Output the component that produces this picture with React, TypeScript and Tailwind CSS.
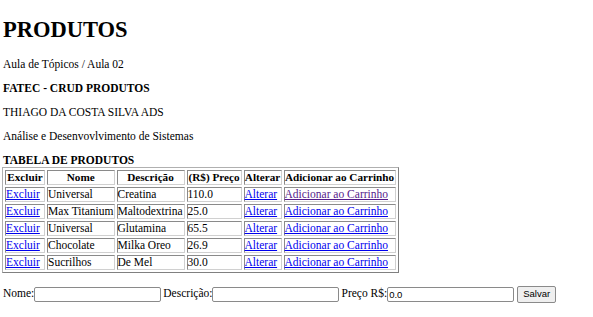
import React from "react";

const rows = [
  ["Universal", "Creatina", "110.0"],
  ["Max Titanium", "Maltodextrina", "25.0"],
  ["Universal", "Glutamina", "65.5"],
  ["Chocolate", "Milka Oreo", "26.9"],
  ["Sucrilhos", "De Mel", "30.0"],
];

const cell =
  "border border-[#8a8a8a] border-b-[#d0d0d0] border-r-[#d0d0d0] p-0 leading-[13px] whitespace-nowrap";

const headers: [string, string][] = [
  ["Excluir", "w-[40px]"],
  ["Nome", "w-[66px]"],
  ["Descrição", "w-[68px]"],
  ["(R$) Preço", "w-[55px]"],
  ["Alterar", "w-[38px]"],
  ["Adicionar ao Carrinho", "w-[112px]"],
];

export default function App() {
  return (
    <div
      className="min-h-[317px] bg-white text-black px-[3px] text-[11.5px]"
      style={{ fontFamily: '"Liberation Serif", "Times New Roman", serif' }}
    >
      <h1 className="text-[22.5px] font-bold leading-[26px] pt-[17px] mb-[15px]">PRODUTOS</h1>
      <p className="leading-[13px] mb-[11px]">Aula de Tópicos / Aula 02</p>
      <p className="leading-[13px] mb-[11px] font-bold">FATEC - CRUD PRODUTOS</p>
      <p className="leading-[13px] mb-[11px]">THIAGO DA COSTA SILVA ADS</p>
      <p className="leading-[13px] mb-[11px]">Análise e Desenvovlvimento de Sistemas</p>
      <p className="leading-[13px] font-bold">TABELA DE PRODUTOS</p>
      <table
        className="border border-[#b0b0b0] border-b-[#808080] border-r-[#808080] border-separate -ml-[1px]"
        style={{ borderSpacing: "2px" }}
      >
        <thead>
          <tr>
            {headers.map(([h, w]) => (
              <th key={h} className={`${cell} ${w} font-bold text-center text-[11.2px]`}>
                {h}
              </th>
            ))}
          </tr>
        </thead>
        <tbody>
          {rows.map((r, i) => (
            <tr key={i}>
              <td className={cell}>
                <a href="#" className="text-[#0000ee] underline">Excluir</a>
              </td>
              <td className={cell}>{r[0]}</td>
              <td className={cell}>{r[1]}</td>
              <td className={cell}>{r[2]}</td>
              <td className={cell}>
                <a href="#" className="text-[#0000ee] underline">Alterar</a>
              </td>
              <td className={cell}>
                <a href="#" className={`${i === 0 ? "text-[#551a8b]" : "text-[#0000ee]"} underline`}>
                  Adicionar ao Carrinho
                </a>
              </td>
            </tr>
          ))}
        </tbody>
      </table>
      <div className="flex items-center mt-[12px] h-[18px]">
        <span>Nome:</span>
        <input className="w-[127px] h-[15px] border border-[#8a8a8a] rounded-[2px] bg-white" />
        <span className="ml-[2px]">Descrição:</span>
        <input className="w-[127px] h-[15px] border border-[#8a8a8a] rounded-[2px] bg-white" />
        <span className="ml-[2px]">Preço R$:</span>
        <input
          defaultValue="0.0"
          className="w-[127px] h-[15px] border border-[#8a8a8a] rounded-[2px] bg-white px-[1px] text-[9.5px]"
          style={{ fontFamily: '"Liberation Sans", Arial, sans-serif' }}
        />
        <button
          className="ml-[3px] h-[17px] px-[5px] border border-[#8a8a8a] rounded-[2px] bg-[#efefef] text-[9.5px] leading-none"
          style={{ fontFamily: '"Liberation Sans", Arial, sans-serif' }}
        >
          Salvar
        </button>
      </div>
    </div>
  );
}
